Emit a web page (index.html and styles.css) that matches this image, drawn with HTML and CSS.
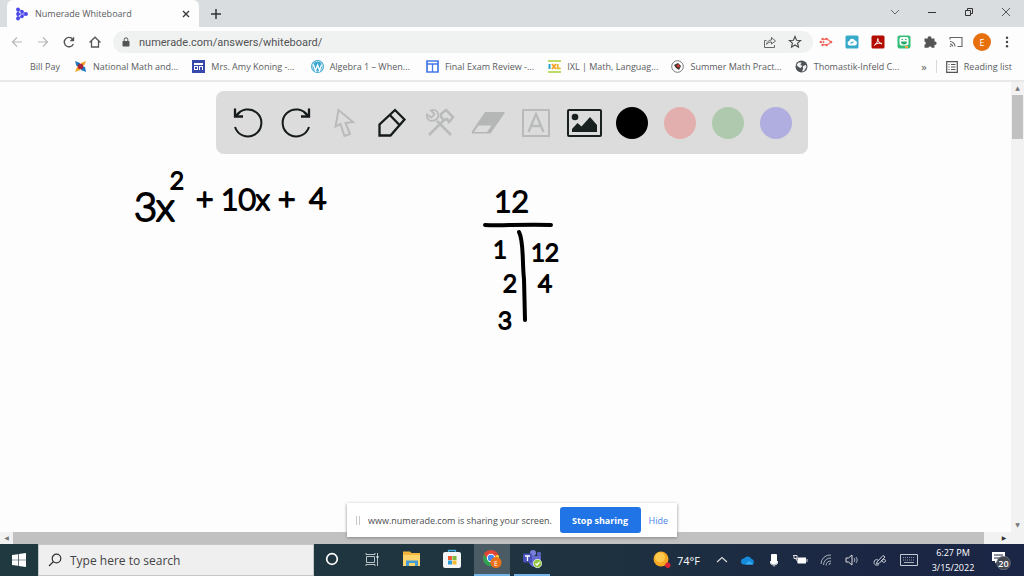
FILE: index.html
```html
<!DOCTYPE html>
<html lang="en">
<head>
<meta charset="utf-8">
<meta name="viewport" content="width=device-width, initial-scale=1">
<title>Numerade Whiteboard</title>
<link rel="stylesheet" href="styles.css">
</head>
<body>
<header class="browser">
  <div class="tabstrip">
    <div class="tab">
      <svg class="tab-logo" viewBox="0 0 14 14" width="14" height="14"><g stroke="#8d8bf5" stroke-width="2" fill="none"><path d="M3 2.500v9l8-4.500z"/><path d="M3 7h8"/></g><g fill="#4b48ea"><circle cx="3" cy="2.500" r="1.900"/><circle cx="3" cy="7" r="1.900"/><circle cx="3" cy="11.500" r="1.900"/><circle cx="7" cy="4.500" r="1.700"/><circle cx="7" cy="9.500" r="1.700"/><circle cx="11" cy="7" r="1.900"/></g></svg>
      <span class="tab-title">Numerade Whiteboard</span>
      <button class="plain" aria-label="Close tab"><svg viewBox="0 0 8 8" width="8" height="8"><path d="M1 1l6 6M7 1L1 7" stroke="#333" stroke-width="1.300"/></svg></button>
    </div>
    <button class="plain new-tab" aria-label="New tab"><svg viewBox="0 0 10 10" width="10" height="10"><path d="M5 0v10M0 5h10" stroke="#333" stroke-width="1.500"/></svg></button>
    <div class="window-controls">
      <button class="plain" aria-label="Search tabs"><svg viewBox="0 0 10 10" width="10" height="10"><path d="M1 3l4 4 4-4" fill="none" stroke="#666"/></svg></button>
      <button class="plain" aria-label="Minimize"><svg viewBox="0 0 10 10" width="10" height="10"><path d="M1 5.500h8" stroke="#333"/></svg></button>
      <button class="plain" aria-label="Restore"><svg viewBox="0 0 10 10" width="10" height="10"><path d="M1.500 3.500h5v5h-5zM3.500 3V1.500h5v5H7" fill="none" stroke="#333"/></svg></button>
      <button class="plain" aria-label="Close"><svg viewBox="0 0 10 10" width="10" height="10"><path d="M1 1l8 8M9 1L1 9" stroke="#555"/></svg></button>
    </div>
  </div>

  <div class="navbar">
    <div class="nav-buttons">
      <button class="plain" aria-label="Back"><svg viewBox="0 0 14 14" width="14" height="14"><path d="M12 7H2.500M7 2.500L2.500 7 7 11.500" fill="none" stroke="#b5b7ba" stroke-width="1.200"/></svg></button>
      <button class="plain" aria-label="Forward"><svg viewBox="0 0 14 14" width="14" height="14"><path d="M2 7h9.500M7 2.500L11.500 7 7 11.500" fill="none" stroke="#b5b7ba" stroke-width="1.200"/></svg></button>
      <button class="plain" aria-label="Reload"><svg viewBox="0 0 14 14" width="14" height="14"><path d="M11.300 9A4.700 4.700 0 1 1 10.700 4.200" fill="none" stroke="#555" stroke-width="1.400"/><path d="M12.200 1.500v4.700H7.500z" fill="#555"/></svg></button>
      <button class="plain" aria-label="Home"><svg viewBox="0 0 14 14" width="14" height="14"><path d="M1.500 7.500L7 2.200l5.500 5.300M3.500 6v6h7V6" fill="none" stroke="#555" stroke-width="1.300"/></svg></button>
    </div>
    <div class="address">
      <svg viewBox="0 0 8 10" width="8" height="10"><rect x=".5" y="4" width="7" height="5.500" rx=".8" fill="#555"/><path d="M2.200 4V2.600a1.800 1.800 0 0 1 3.600 0V4" fill="none" stroke="#555"/></svg>
      <input class="address-input" type="text" aria-label="Address" value="numerade.com/answers/whiteboard/">
      <button class="plain" aria-label="Share"><svg viewBox="0 0 14 14" width="14" height="14"><path d="M3.500 5.500H1.500v7h10V10" fill="none" stroke="#666"/><path d="M3.500 9.500c.5-3 2.500-4.500 5-4.500V2.500L12.500 6 8.500 9V7c-2 0-3.500.5-5 2.500z" fill="none" stroke="#666"/></svg></button>
      <button class="plain" aria-label="Bookmark this tab"><svg viewBox="0 0 14 14" width="14" height="14"><path d="M7 1.500l1.600 3.700 4 .3-3 2.600.9 4L7 10l-3.500 2.100.9-4-3-2.600 4-.3z" fill="none" stroke="#444" stroke-width="1.100"/></svg></button>
    </div>
    <div class="extensions">
      <button class="plain" aria-label="Extension"><svg viewBox="0 0 14 14" width="14" height="14"><g fill="none" stroke="#f77b72" stroke-width="1.300"><path d="M4 4.500l4-.5 4 3-4 3-4-.5"/></g><g fill="#ef625a"><circle cx="3.500" cy="4" r="1.200"/><circle cx="1.800" cy="7" r="1.200"/><circle cx="4.500" cy="7" r="1"/><circle cx="3.500" cy="10" r="1.200"/><circle cx="7.500" cy="4" r="1.200"/><circle cx="7.500" cy="10" r="1.200"/><circle cx="12" cy="7" r="1.300"/></g></svg></button>
      <button class="plain" aria-label="Cloud extension"><svg viewBox="0 0 14 14" width="14" height="14"><rect x=".5" y=".5" width="13" height="13" rx="1.500" fill="#39a9ca"/><path d="M4.500 10.500a2.300 2.300 0 0 1-.2-4.500A3 3 0 0 1 9.900 5.600a2.500 2.500 0 0 1 .1 4.900z" fill="#fff"/><path d="M5.500 8.500l3-1.800" stroke="#39a9ca" stroke-width="1.200"/></svg></button>
      <button class="plain" aria-label="PDF extension"><svg viewBox="0 0 14 14" width="14" height="14"><rect x=".5" y=".5" width="13" height="13" rx="1.500" fill="#b30b00"/><path d="M3 10.500c2-1 4-4 3.800-7M6.800 3.500c.2 3 1.700 5 4.200 5.500M4 9.500c2-1.200 4.500-1.600 7-1.200" fill="none" stroke="#fff"/></svg></button>
      <button class="plain" aria-label="Emoji extension"><svg viewBox="0 0 14 14" width="14" height="14"><rect x=".5" y=".5" width="13" height="13" rx="2" fill="#32bd78"/><rect x="2.500" y="2" width="9" height="8.500" rx="2" fill="#fff"/><path d="M4 6.500h6a3 3 0 0 1-6 0zM4.500 4h1.500v1H4.500zM8 4h1.500v1H8z" fill="#28a868"/><path d="M8 11h3v2H8z" fill="#f2a23c"/></svg></button>
      <button class="plain" aria-label="Extensions"><svg viewBox="0 0 14 14" width="14" height="14"><path d="M1.500 3.500h3.300a1.800 1.800 0 1 1 3.500 0h3.200v3a1.700 1.700 0 1 1 0 3.300v3H8.700a1.700 1.700 0 0 0-3.300 0H1.500V9.800a1.700 1.700 0 0 0 0-3.300z" fill="#555"/></svg></button>
      <button class="plain" aria-label="Cast"><svg viewBox="0 0 14 14" width="14" height="14"><path d="M1 4.500v-2h12v9H8.500M1 6.500A5 5 0 0 1 6 11.500M1 9a2.500 2.500 0 0 1 2.500 2.500" fill="none" stroke="#666" stroke-width="1.100"/><circle cx="1.500" cy="11.300" r=".8" fill="#666"/></svg></button>
      <button class="plain avatar" aria-label="Profile">E</button>
      <button class="plain" aria-label="Menu"><svg viewBox="0 0 14 14" width="14" height="14" fill="#444"><circle cx="7" cy="2.800" r="1.200"/><circle cx="7" cy="7" r="1.200"/><circle cx="7" cy="11.200" r="1.200"/></svg></button>
    </div>
  </div>

  <nav class="bookmarks">
    <a href="#">Bill Pay</a>
    <a href="#"><svg viewBox="0 0 13 13" width="13" height="13"><path d="M1 1l5 2 .5 4L2.500 6z" fill="#2374b8"/><path d="M12 1L7 3 5.500 7l5-2z" fill="#f2a029"/><path d="M1 12l2-5 4-.5L6 10z" fill="#f5a623"/><path d="M12 12l-5-2V6l4 1z" fill="#1c79bf"/><circle cx="6.500" cy="6.500" r="2.800" fill="#a5253b"/></svg><span>National Math and...</span></a>
    <a href="#"><svg viewBox="0 0 13 13" width="13" height="13"><path d="M0 0h13v13H0z" fill="#3949ab"/><path d="M2 3h9v2H2zM2 6h4v4H2zM7 6h4v4H7z" fill="#fff"/><path d="M3 7h2v2H3zM8 7h2v3H8z" fill="#3949ab"/></svg><span>Mrs. Amy Koning -...</span></a>
    <a href="#"><svg viewBox="0 0 13 13" width="13" height="13"><circle cx="6.500" cy="6.500" r="6.500" fill="#38a5cf"/><circle cx="6.500" cy="6.500" r="5.200" fill="none" stroke="#fff" stroke-width=".6"/><path d="M2.300 4.200l2.300 6.300 2-5.500 2 5.500 2-6" fill="none" stroke="#fff" stroke-width="1.300"/></svg><span>Algebra 1 – When...</span></a>
    <a href="#"><svg viewBox="0 0 13 13" width="13" height="13"><path d="M1 1h11v11H1z" fill="#fff" stroke="#4478e8" stroke-width="1.700"/><path d="M1 4h11M6.500 4v8" stroke="#4478e8" stroke-width="1.300"/></svg><span>Final Exam Review -...</span></a>
    <a href="#"><svg viewBox="0 0 13 13" width="13" height="13"><path d="M0 1h13M0 12h13" stroke="#a8cf38" stroke-width="1.500"/><path d="M1.500 4v5" stroke="#28a4c9" stroke-width="2"/><path d="M4 4l4 5M8 4L4 9" stroke="#f5a023" stroke-width="1.800"/><path d="M9.700 4v4.300h3" fill="none" stroke="#e6b928" stroke-width="1.800"/></svg><span>IXL | Math, Languag...</span></a>
    <a href="#"><svg viewBox="0 0 13 13" width="13" height="13"><circle cx="6.500" cy="6.500" r="5.800" fill="#fff" stroke="#777"/><path d="M3 5l4-2 3 3-2 4-3-2z" fill="#333"/><path d="M5 5l3-1 1 3-2 1z" fill="#c43c35"/></svg><span>Summer Math Pract...</span></a>
    <a href="#"><svg viewBox="0 0 13 13" width="13" height="13"><circle cx="6.500" cy="6.500" r="6" fill="#4e5257"/><path d="M1.500 5l2-2.500 3 0-1 2.500 2 1-2 2-2-1zM8 6l3-1 .5 2-2.500 4-2 .5 1-2.500z" fill="#f1f1f1"/></svg><span>Thomastik-Infeld C...</span></a>
    <button class="plain more" aria-label="More bookmarks">»</button>
    <button class="plain reading"><svg viewBox="0 0 12 12" width="12" height="12"><path d="M.7.7h10.600v10.600H.7z" fill="none" stroke="#555" stroke-width="1.200"/><path d="M2.500 3.500h1M5 3.500h4.500M2.500 6h1M5 6h4.500M2.500 8.500h1M5 8.500h4.500" stroke="#555"/></svg>Reading list</button>
  </nav>
</header>

<main class="page">
  <section class="whiteboard">
    <div class="tools" role="toolbar" aria-label="Drawing tools">
      <button class="plain" aria-label="Undo"><svg viewBox="0 0 32 32" width="32" height="32"><path d="M3 20A13.500 13.500 0 1 0 4 9.500" fill="none" stroke="#151a1a" stroke-width="2"/><path d="M3 1.500v8h8M3 9.500L8 5" fill="none" stroke="#151a1a" stroke-width="2.300"/></svg></button>
      <button class="plain" aria-label="Redo"><svg viewBox="0 0 32 32" width="32" height="32"><path d="M29 20A13.500 13.500 0 1 1 28 9.500" fill="none" stroke="#151a1a" stroke-width="2"/><path d="M29 1.500v8h-8M29 9.500L24 5" fill="none" stroke="#151a1a" stroke-width="2.300"/></svg></button>
      <button class="plain" aria-label="Select"><svg viewBox="0 0 32 32" width="32" height="32"><path d="M10.500 3L7.500 19.500l5-2.500 4 12 5.500-2-4.500-11 7.500-1z" fill="none" stroke="#b9bbba" stroke-width="2"/></svg></button>
      <button class="plain" aria-label="Pen"><svg viewBox="0 0 32 32" width="32" height="32"><path d="M3.500 28.500V17.500L19 3l9.500 9.500L14.500 28.500zM13.800 8l9.700 10" fill="none" stroke="#151a1a" stroke-width="2.300"/></svg></button>
      <button class="plain" aria-label="Shapes"><svg viewBox="0 0 32 32" width="32" height="32"><g fill="none" stroke="#b9bbba" stroke-width="2.500"><path d="M5 28l15-15M27 28L13 14"/><path d="M7 3.500l3.500 3.500-3 3.500L3 7.500c-1 4 3 7.500 6.500 6 3.500 0 6-4 4.500-7.500-1-2.500-4-4-7-2.500z" stroke-width="1.800"/><path d="M17 7l5-4 7 7-4 5-2-3-3 1-3-3z"/></g></svg></button>
      <button class="plain" aria-label="Eraser"><svg viewBox="0 0 36 32" width="36" height="32"><path d="M15 5h18.500a1 1 0 0 1 .5 2L20.500 26.500H2.500L1.500 25z" fill="#b5b7b6"/><path d="M8.500 18.500h13l-4.500 6.500H4z" fill="#dcdcdc"/></svg></button>
      <button class="plain" aria-label="Text"><svg viewBox="0 0 32 32" width="32" height="32"><path d="M3 3h26v26H3z" fill="none" stroke="#b9bbba" stroke-width="2"/><path d="M8.500 25L16 7l7.500 18M11 19h10" fill="none" stroke="#b9bbba" stroke-width="2.300"/></svg></button>
      <button class="plain" aria-label="Insert image"><svg viewBox="0 0 36 32" width="36" height="32"><rect x="2" y="3" width="33" height="26" rx="1" fill="none" stroke="#182020" stroke-width="2"/><circle cx="9" cy="10" r="3.300" fill="#182020"/><path d="M6 25v-3l5.500-6 4 3.500L24 10l7 8v7z" fill="#182020"/></svg></button>
      <button class="plain swatch black" aria-label="Black"></button>
      <button class="plain swatch red" aria-label="Red"></button>
      <button class="plain swatch green" aria-label="Green"></button>
      <button class="plain swatch violet" aria-label="Violet"></button>
    </div>
    <svg class="ink" viewBox="0 0 600 190" width="600" height="190">
      <g class="ink-text">
        <text class="large" x="14" y="67">3</text>
        <text class="large" x="36" y="67">x</text>
        <text class="small" x="50" y="35">2</text>
        <text class="medium" x="76" y="56">+</text>
        <text class="medium" x="101" y="56">10x</text>
        <text class="medium" x="158" y="56">+</text>
        <text class="medium" x="189" y="55">4</text>
        <text class="medium" x="374" y="58">12</text>
        <text class="small" x="373" y="104">1</text>
        <text class="small" x="411" y="107">12</text>
        <text class="small" x="383" y="138">2</text>
        <text class="small" x="418" y="138">4</text>
        <text class="small" x="378" y="175">3</text>
      </g>
      <path class="ink-line" d="M365 71c16 1 36-1 66 0M399 78c5 9 3 30 5 47l1 41"/>
    </svg>
  </section>
  <div class="scroll-v"><span class="arrow">▲</span><span class="thumb"></span><span class="arrow last">▼</span></div>
  <div class="scroll-h"><span class="arrow">◀</span><span class="thumb"></span><span class="arrow">▶</span></div>
  <div class="share-bar" role="status">
    <span class="grip"></span>
    <span class="share-text">www.numerade.com is sharing your screen.</span>
    <button class="plain stop">Stop sharing</button>
    <button class="plain hide">Hide</button>
  </div>
</main>

<footer class="taskbar">
  <button class="plain start" aria-label="Start"><svg viewBox="0 0 14 14" width="14" height="14" fill="#fff"><path d="M0 2l6-.8v5.500H0zM6.700 1L14 0v6.700H6.700zM0 7.300h6v5.500L0 12zM6.700 7.300H14V14l-7.300-1z"/></svg></button>
  <label class="search"><svg viewBox="0 0 14 14" width="14" height="14"><circle cx="8.500" cy="5.500" r="4.300" fill="none" stroke="#333" stroke-width="1.200"/><path d="M5.500 8.500L1 13" stroke="#333" stroke-width="1.300"/></svg><input class="search-input" type="text" placeholder="Type here to search" aria-label="Type here to search"></label>
  <div class="apps">
    <button class="plain" aria-label="Cortana"><svg viewBox="0 0 20 20" width="20" height="20"><circle cx="10" cy="10" r="5.300" fill="none" stroke="#fff" stroke-width="1.700"/></svg></button>
    <button class="plain" aria-label="Task view"><svg viewBox="0 0 20 20" width="20" height="20"><path d="M4.500 7.500h8v6h-8zM4 4v1.500h9V4M4 17v-1.500h9V17M15.500 4v13" fill="none" stroke="#b9c4c8"/><path d="M14.500 7h2v2h-2z" fill="#dce3e5"/></svg></button>
    <button class="plain" aria-label="File Explorer"><svg viewBox="0 0 20 20" width="20" height="20"><path d="M1 4V2.500h7L9.500 4H18v13H1z" fill="#f3b63d"/><path d="M1 6h17v11H1z" fill="#fcd66c"/><path d="M4 17v-5.500h12V17h-3v-3H7v3z" fill="#459bd4"/></svg></button>
    <button class="plain" aria-label="Microsoft Store"><svg viewBox="0 0 20 20" width="20" height="20"><path d="M6.500 5V1.500h7V5" fill="none" stroke="#45aee0" stroke-width="1.300"/><rect x="1" y="3" width="18" height="16" rx="2" fill="#f4f5f6"/><path d="M6 7h4v4H6z" fill="#ee5730"/><path d="M10.500 7h4v4h-4z" fill="#7cb83a"/><path d="M6 11.500h4v4H6z" fill="#2a9ddb"/><path d="M10.500 11.500h4v4h-4z" fill="#f5b92b"/></svg></button>
    <button class="plain active" aria-label="Chrome"><svg viewBox="0 0 20 20" width="20" height="20"><circle cx="9" cy="9" r="8" fill="#e24435"/><path d="M2 5l5 7 3 5C4 18-1 12 2 5z" fill="#2ea453"/><path d="M10 17l4-11h2.500c2 6-1 11-6.500 11z" fill="#f6c933"/><circle cx="9" cy="9" r="4.200" fill="#fff"/><circle cx="9" cy="9" r="3.200" fill="#4285f4"/><circle cx="14" cy="13.500" r="5.500" fill="#e8711a"/><text class="badge-letter" x="14" y="16.500">E</text></svg></button>
    <button class="plain open" aria-label="Teams"><svg viewBox="0 0 20 20" width="20" height="20"><circle cx="11" cy="4" r="3" fill="#7880dc"/><circle cx="17" cy="5" r="2.200" fill="#5a63c4"/><path d="M7 7h12v6a5 5 0 0 1-5 5c-4 0-7-2-7-6z" fill="#6269cf"/><rect x="1" y="4.500" width="9" height="9" rx="1" fill="#4650b8"/><path d="M3 7h5M5.500 7v5" stroke="#fff" stroke-width="1.300"/><circle cx="15.500" cy="14.500" r="4.200" fill="#91c33f" stroke="#fff" stroke-width=".7"/><path d="M13.500 14.500l1.500 1.500 2.500-3" fill="none" stroke="#fff" stroke-width="1.200"/></svg></button>
  </div>
  <div class="tray">
    <button class="plain weather"><svg viewBox="0 0 18 18" width="18" height="18"><circle cx="8" cy="8" r="7.500" fill="#f9a921"/><circle cx="7" cy="6.500" r="5" fill="#ffc94e"/><circle cx="14.800" cy="14.200" r="2.700" fill="#dc2336"/></svg>74°F</button>
    <div class="tray-icons">
      <svg viewBox="0 0 16 16" width="16" height="16"><path d="M3 10l5-4.500L13 10" fill="none" stroke="#ddd" stroke-width="1.100"/></svg>
      <svg viewBox="0 0 16 16" width="16" height="16"><path d="M4 12.500a3 3 0 0 1 0-6A4.200 4.200 0 0 1 11.500 7a3 3 0 0 1 1 5.500z" fill="#168bdc"/><path d="M5 12.500l4-3.500 4.500 3.500z" fill="#37aef5"/></svg>
      <svg viewBox="0 0 16 16" width="16" height="16"><rect x="5" y="2" width="6" height="10" rx="1" fill="#fff"/><path d="M4.500 9v2a3.500 2 0 0 0 7 0V9M8 12v2.500" fill="none" stroke="#dfe4ea"/></svg>
      <svg viewBox="0 0 16 16" width="16" height="16"><path d="M5.500 5.500H14v6H5.500z" fill="#fff"/><path d="M1 3.500h4v3H2v-3M4 7l2 3M15 7v3" fill="none" stroke="#ddd"/></svg>
      <svg viewBox="0 0 16 16" width="16" height="16"><path d="M3 12A9 9 0 0 1 13 3M5.500 13A7 7 0 0 1 13 6M8 13.500A5 5 0 0 1 13 9M11 13a2 2 0 0 1 2-2" fill="none" stroke="#b8bfc8" stroke-width=".9"/></svg>
      <svg viewBox="0 0 16 16" width="16" height="16"><path d="M2 6h2.500L8 3v10L4.500 10H2z" fill="none" stroke="#ddd"/><path d="M10 6c1 1 1 3 0 4M12 5c1.500 2 1.500 4 0 6" fill="none" stroke="#aab2be"/></svg>
      <svg class="pen" viewBox="0 0 16 16" width="16" height="16"><path d="M5 10l6-6.500 2 1.500-6 6.500-2.500.5zM6 8c-2-1-4 0-4 2.500S5 14 7 12.500M9 9c2-2 5-2 4.500 0s-3 1.500-3.500 0" fill="none" stroke="#c9cfd8"/></svg>
      <svg viewBox="0 0 18 14" width="18" height="14"><path d="M.5 1.500h17v11H.5z" fill="none" stroke="#c3c9d2"/><path d="M3 4.500h12M3 7h12" stroke="#8992a3" stroke-dasharray="1 1"/><path d="M4 9.500h10" stroke="#aab2be"/></svg>
    </div>
    <div class="clock"><span>6:27 PM</span><span>3/15/2022</span></div>
    <button class="plain notice" aria-label="20 notifications"><svg viewBox="0 0 20 20" width="20" height="20"><path d="M1 2h13v9H6.500L4 13.500V11H1z" fill="#fff"/><path d="M3 5h9M3 8h7" stroke="#1b2743"/><circle cx="12.500" cy="13" r="6.800" fill="#42464f" stroke="#7c8089" stroke-width=".7"/><text class="badge-count" x="12.500" y="16.500">20</text></svg></button>
  </div>
</footer>
</body>
</html>
```
FILE: styles.css
```css
* { box-sizing: border-box; }

body {
  margin: 0;
  height: 100vh;
  display: flex;
  flex-direction: column;
  overflow: hidden;
  background: #fdfdfd;
  color: #5a5c5e;
  font-family: "Open Sans", "Noto Sans", sans-serif;
  font-size: 9px;
}

svg { display: block; flex: none; }

.plain {
  display: flex;
  align-items: center;
  justify-content: center;
  margin: 0;
  padding: 0;
  border: 0;
  background: none;
  color: inherit;
  font: inherit;
}

input {
  min-width: 0;
  padding: 0;
  border: 0;
  outline: 0;
  background: none;
  font: inherit;
}

/* Browser chrome */
.tabstrip {
  display: flex;
  align-items: stretch;
  height: 27px;
  background: #dadddf;
}

.tab {
  display: flex;
  align-items: center;
  gap: 6px;
  width: 192px;
  margin-left: 7px;
  padding: 0 9px 0 8px;
  border-radius: 6px 6px 0 0;
  background: #fdfdfd;
}

.tab-title { flex: 1; white-space: nowrap; }

.new-tab { width: 34px; }

.window-controls { display: flex; margin-left: auto; }
.window-controls .plain { width: 37px; padding-bottom: 4px; }

.navbar { display: flex; align-items: center; height: 30px; }

.nav-buttons { display: flex; width: 113px; padding-left: 4px; }
.nav-buttons .plain { width: 26px; }

.address {
  flex: 1;
  display: flex;
  align-items: center;
  gap: 9px;
  height: 22px;
  padding: 0 10px 0 9px;
  border-radius: 11px;
  background: #f0f2f2;
}
.address .plain { width: 16px; }

.address-input {
  flex: 1;
  color: #505254;
  font-family: Roboto, "Open Sans", sans-serif;
  font-size: 11px;
}

.extensions { display: flex; align-items: center; padding-right: 5px; }
.extensions .plain { width: 26px; }
.extensions .plain:last-child { width: 24px; }
.extensions .avatar {
  width: 18px;
  height: 18px;
  margin: 0 4px;
  border-radius: 50%;
  background: #e8700c;
  color: #fff;
}

.bookmarks {
  display: grid;
  grid-template-columns: 44fr 118fr 118fr 115fr 122fr 123fr 123fr 117fr 24px 76px;
  align-items: center;
  height: 25px;
  padding: 0 12px 4px 30px;
  border-bottom: 2px solid #e8e8e8;
}
.bookmarks a {
  display: flex;
  align-items: center;
  gap: 6px;
  color: inherit;
  text-decoration: none;
  white-space: nowrap;
}
.more { font-size: 11px; }
.bookmarks .reading {
  justify-content: flex-end;
  gap: 6px;
  border-left: 1px solid #d8d8d8;
  white-space: nowrap;
}

/* Page with its scrollbars */
.page {
  flex: 1;
  min-height: 0;
  display: grid;
  grid-template-columns: 1fr 13px;
  grid-template-rows: 1fr 12px;
  position: relative;
}

.whiteboard { min-width: 0; padding: 9px 0 0 13px; overflow: hidden; }

.tools {
  display: grid;
  grid-template-columns: repeat(12, 48px);
  align-items: center;
  justify-content: center;
  width: 592px;
  height: 63px;
  margin: 0 auto;
  border-radius: 8px;
  background: #dcdcdc;
}
.swatch {
  width: 32px;
  height: 32px;
  justify-self: center;
  border-radius: 50%;
}
.black { background: #000; }
.red { background: #e3afae; }
.green { background: #afc9ae; }
.violet { background: #b0ade0; }

.ink { margin: 0 107px; }
.ink-text {
  fill: #000;
  stroke: #000;
  stroke-width: 2;
  stroke-linejoin: round;
  font-family: Lato, sans-serif;
  font-weight: 300;
}
.large { font-size: 40px; }
.medium { font-size: 30px; }
.small { font-size: 24px; }
.ink-line {
  fill: none;
  stroke: #000;
  stroke-width: 4;
  stroke-linecap: round;
}

.scroll-v, .scroll-h {
  display: flex;
  background: #f2f2f2;
}
.scroll-v { flex-direction: column; }
.scroll-h { grid-column: 1 / -1; }
.arrow {
  flex: 0 0 13px;
  color: #777;
  font-family: "DejaVu Sans", sans-serif;
  font-size: 6px;
  line-height: 12px;
  text-align: center;
}
.scroll-v .thumb { height: 44px; margin: 0 1px; background: #c1c1c1; }
.scroll-h .thumb { flex: 1; background: #c1c1c1; }
.scroll-h .arrow:last-child { flex-basis: 40px; color: #333; }
.last { margin-top: auto; }

.share-bar {
  position: absolute;
  left: 50%;
  bottom: 7px;
  transform: translateX(-50%);
  display: flex;
  align-items: center;
  width: 330px;
  height: 34px;
  padding: 0 9px;
  background: #fff;
  box-shadow: 0 1px 3px #888;
}
.grip {
  width: 4px;
  height: 9px;
  margin-right: 8px;
  border: solid #c8c8c8;
  border-width: 0 1px;
}
.share-text { flex: 1; color: #4c4c4c; white-space: nowrap; }
.stop {
  width: 81px;
  height: 26px;
  margin-right: 8px;
  border-radius: 3px;
  background: #2174e6;
  color: #fff;
  font-weight: 700;
}
.hide { color: #4984e8; }

/* Taskbar */
.taskbar {
  display: flex;
  height: 32px;
  background: linear-gradient(90deg, #20383f, #1e333f 55%, #1b2644 85%, #1b2545);
  color: #fff;
}
.start { width: 38px; }
.search {
  display: flex;
  align-items: center;
  gap: 8px;
  width: 276px;
  padding: 0 9px;
  border: 1px solid #c4c8c9;
  background: #efefef;
}
.search-input { flex: 1; color: #444; font-size: 12px; }
.search-input::placeholder { color: #444; opacity: 1; }

.apps { display: flex; }
.apps .plain { width: 36px; margin-right: 4px; border-bottom: 2px solid transparent; }
.apps .active { background: #4b5b63; border-color: #72b4e8; }
.apps .open { border-color: #72b4e8; }
.badge-letter { fill: #fff; font-size: 7px; text-anchor: middle; }
.badge-count { fill: #fff; font-size: 9px; font-weight: 600; text-anchor: middle; }

.tray { display: flex; align-items: center; margin-left: auto; padding-right: 13px; }
.weather { gap: 6px; font-size: 11px; }
.tray-icons { display: flex; align-items: center; gap: 10px; margin: 0 12px 0 14px; }
.pen { margin: 0 2px; }
.clock {
  display: flex;
  flex-direction: column;
  align-items: center;
  width: 46px;
  font-size: 9px;
  line-height: 15px;
}
.notice { margin-left: 15px; }
```
